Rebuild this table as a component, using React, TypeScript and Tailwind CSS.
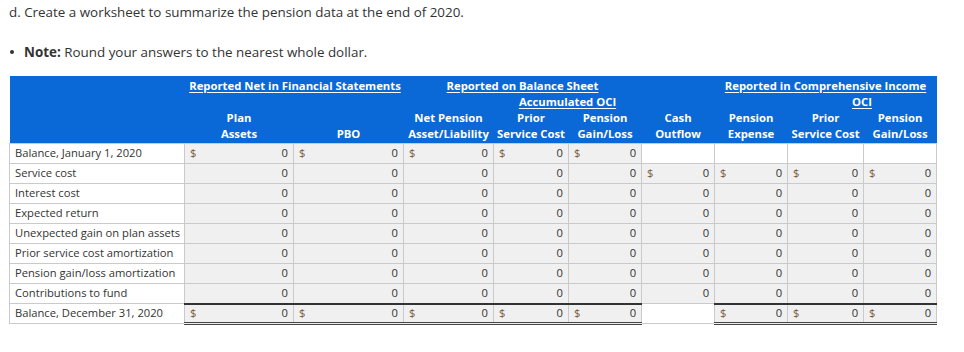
import React from "react";

type Cell = "empty" | "zero" | "dollar";

const rows: { label: string; cells: Cell[]; total?: boolean }[] = [
  { label: "Balance, January 1, 2020", cells: ["dollar", "dollar", "dollar", "dollar", "dollar", "empty", "empty", "empty", "empty"] },
  { label: "Service cost", cells: ["zero", "zero", "zero", "zero", "zero", "dollar", "dollar", "dollar", "dollar"] },
  { label: "Interest cost", cells: Array(9).fill("zero") },
  { label: "Expected return", cells: Array(9).fill("zero") },
  { label: "Unexpected gain on plan assets", cells: Array(9).fill("zero") },
  { label: "Prior service cost amortization", cells: Array(9).fill("zero") },
  { label: "Pension gain/loss amortization", cells: Array(9).fill("zero") },
  { label: "Contributions to fund", cells: Array(9).fill("zero") },
  { label: "Balance, December 31, 2020", cells: ["dollar", "dollar", "dollar", "dollar", "dollar", "empty", "dollar", "dollar", "dollar"], total: true },
];

const widths = [175, 109, 110, 90, 75, 73, 73, 73, 76, 73];

function GroupTitle({ children }: { children: React.ReactNode }) {
  return <span className="underline underline-offset-2">{children}</span>;
}

function SubHead({ top, bottom }: { top?: string; bottom: string }) {
  return (
    <th className="align-bottom text-center font-bold pb-[1px] leading-[16px] whitespace-nowrap">
      <div>{top ?? "\u00a0"}</div>
      <div>{bottom}</div>
    </th>
  );
}

export default function App() {
  return (
    <div className="bg-white w-[964px] h-[352px] text-[#333] pt-[3px]" style={{ fontFamily: "'Open Sans', sans-serif" }}>
      <p className="text-[13.4px] leading-[18px] pl-[9px]">d. Create a worksheet to summarize the pension data at the end of 2020.</p>

      <div className="flex items-center mt-[22px] pl-[10px] text-[13.4px] leading-[18px]">
        <span className="w-[4px] h-[4px] rounded-full bg-[#333] mr-[10px]" />
        <span><b>Note:</b> Round your answers to the nearest whole dollar.</span>
      </div>

      <table className="ml-[9px] mt-[15px] border-collapse table-fixed text-[11.2px]" style={{ width: 927 }}>
        <colgroup>
          {widths.map((w, i) => (
            <col key={i} style={{ width: w }} />
          ))}
        </colgroup>
        <thead className="bg-[#0a68d7] text-white text-[11.3px]">
          <tr className="h-[18px] leading-[16px]">
            <th rowSpan={3} />
            <th colSpan={2} className="text-center font-bold pt-[1px] pl-[2px]"><GroupTitle>Reported Net in Financial Statements</GroupTitle></th>
            <th colSpan={3} className="text-center font-bold pt-[1px]"><GroupTitle>Reported on Balance Sheet</GroupTitle></th>
            <th />
            <th colSpan={3} className="text-center font-bold pt-[1px]"><GroupTitle>Reported in Comprehensive Income</GroupTitle></th>
          </tr>
          <tr className="h-[16px] leading-[16px]">
            <th colSpan={3} />
            <th colSpan={2} className="text-center font-bold"><GroupTitle>Accumulated OCI</GroupTitle></th>
            <th colSpan={2} />
            <th colSpan={2} className="text-center font-bold"><GroupTitle>OCI</GroupTitle></th>
          </tr>
          <tr className="h-[33px]">
            <SubHead top="Plan" bottom="Assets" />
            <SubHead bottom="PBO" />
            <SubHead top="Net Pension" bottom="Asset/Liability" />
            <SubHead top="Prior" bottom="Service Cost" />
            <SubHead top="Pension" bottom="Gain/Loss" />
            <SubHead top="Cash" bottom="Outflow" />
            <SubHead top="Pension" bottom="Expense" />
            <SubHead top="Prior" bottom="Service Cost" />
            <SubHead top="Pension" bottom="Gain/Loss" />
          </tr>
        </thead>
        <tbody>
          {rows.map((r) => (
            <tr key={r.label} className="h-[20px]">
              <td className="border border-[#cacaca] pl-[5px] whitespace-nowrap bg-white">{r.label}</td>
              {r.cells.map((c, i) => {
                if (c === "empty") {
                  return <td key={i} className="border border-[#cacaca] bg-white" />;
                }
                return (
                  <td
                    key={i}
                    className={`border border-[#cacaca] bg-[#f0f0f0] px-[5px] ${r.total ? "border-t-2 border-t-[#333] border-b-[3px] border-b-[#444]" : ""}`}
                    style={r.total ? { borderBottomStyle: "double", borderTopStyle: "solid" } : undefined}
                  >
                    <div className="flex justify-between items-center">
                      <span className="text-[#7a5a3a]">{c === "dollar" ? "$" : ""}</span>
                      <span>0</span>
                    </div>
                  </td>
                );
              })}
            </tr>
          ))}
        </tbody>
      </table>
    </div>
  );
}
